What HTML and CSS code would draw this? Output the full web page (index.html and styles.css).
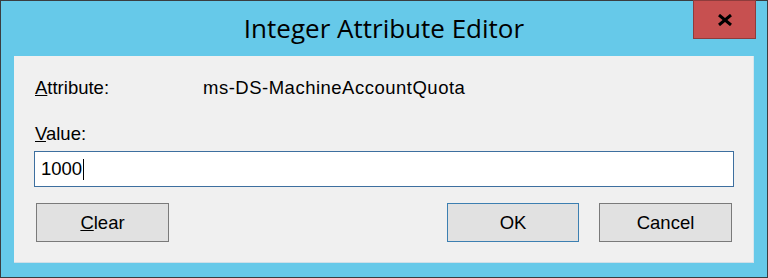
FILE: index.html
```html
<!DOCTYPE html>
<html>
<head>
<meta charset="utf-8">
<link rel="stylesheet" href="styles.css">
</head>
<body>
<div class="window">
  <div class="titlebar">
    <div class="title">Integer Attribute Editor</div>
    <div class="close">
      <svg width="16" height="12" viewBox="0 0 16 12"><path d="M2 1 L14 11 M14 1 L2 11" stroke="#000" stroke-width="3" stroke-linecap="butt"/></svg>
    </div>
  </div>
  <div class="panel">
    <div class="row-attr">
      <span class="label"><u>A</u>ttribute:</span>
      <span class="attr-value">ms-DS-MachineAccountQuota</span>
    </div>
    <div class="value-label"><u>V</u>alue:</div>
    <div class="input"><span class="text">1000</span><span class="caret"></span></div>
    <div class="buttons">
      <button class="btn"><u>C</u>lear</button>
      <div class="spacer"></div>
      <button class="btn btn-default">OK</button>
      <button class="btn">Cancel</button>
    </div>
  </div>
</div>
</body>
</html>
```

FILE: styles.css
```css
html, body {
  margin: 0;
  padding: 0;
  width: 768px;
  height: 278px;
  overflow: hidden;
}
.window {
  box-sizing: border-box;
  width: 768px;
  height: 278px;
  background: #66c9e9;
  border: 1px solid #3a3d40;
  display: flex;
  flex-direction: column;
}
.titlebar {
  height: 55px;
  position: relative;
  display: flex;
  justify-content: center;
}
.title {
  font-family: "Open Sans", "Noto Sans", sans-serif;
  font-size: 26px;
  color: #000;
  margin-top: 9px;
  line-height: 36px;
}
.close {
  position: absolute;
  top: -1px;
  left: 692px;
  box-sizing: border-box;
  width: 63px;
  height: 39px;
  background: #c75050;
  border: 1px solid #8e3c3c;
  display: flex;
  align-items: center;
  justify-content: center;
}
.panel {
  box-sizing: border-box;
  margin-left: 13px;
  width: 740px;
  height: 207px;
  background: #f0f0f0;
  border-right: 1px solid #d6e6ee;
  border-bottom: 1px solid #cfdfe8;
  padding: 0 19px 0 20px;
  font-family: "Liberation Sans", Arial, sans-serif;
  font-size: 18.5px;
  color: #000;
}
.row-attr {
  display: flex;
  padding-top: 21px;
  padding-left: 1px;
  height: 22px;
  line-height: 22px;
}
.label {
  width: 168px;
}
.attr-value {
  letter-spacing: 0.5px;
}
.value-label {
  margin-top: 24px;
  padding-left: 1px;
  height: 22px;
  line-height: 22px;
}
.input {
  margin-top: 6px;
  box-sizing: border-box;
  height: 36px;
  background: #fff;
  border: 1px solid #3d6f9f;
  display: flex;
  align-items: center;
  padding-left: 6px;
}
.text {
  line-height: 20px;
}
.caret {
  width: 1px;
  height: 21px;
  background: #000;
  margin-left: 1px;
}
.buttons {
  display: flex;
  margin-top: 16px;
  padding-left: 2px;
  padding-right: 2px;
}
.spacer {
  flex: 1;
}
.btn {
  box-sizing: border-box;
  width: 133px;
  height: 39px;
  background: #e1e1e1;
  border: 1px solid #7a7a7a;
  font-family: "Liberation Sans", Arial, sans-serif;
  font-size: 18.5px;
  color: #000;
  padding: 0;
  margin: 0;
}
.btn-default {
  border-color: #3c7fb1;
  width: 132px;
  margin-right: 20px;
}
```
